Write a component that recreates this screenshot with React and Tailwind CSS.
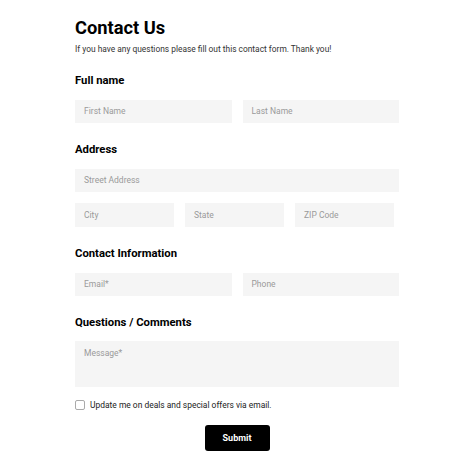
import React from "react";

const FONT = { fontFamily: "Roboto, 'Liberation Sans', sans-serif" };

const Field = ({ placeholder, className = "" }) => (
    <div className={`flex h-[23px] items-center bg-[#f5f5f5] pl-[9px] text-[8.5px] text-[#9a9a9a] ${className}`}>
        {placeholder}
    </div>
);

const Heading = ({ children, className = "" }) => (
    <h2 className={`text-[11.3px] font-bold leading-[16px] text-black ${className}`}>{children}</h2>
);

export default function App() {
    return (
        <div className="min-h-[474px] w-full bg-white" style={FONT}>
            <div className="mx-auto flex w-[324px] flex-col pt-[16px]">
                <h1 className="text-[18.3px] font-bold leading-[23px] text-black">Contact Us</h1>
                <p className="mt-[4px] text-[8.4px] leading-[12px] text-[#333]">
                    If you have any questions please fill out this contact form. Thank you!
                </p>

                {/* Full name */}
                <Heading className="mt-[18px]">Full name</Heading>
                <div className="mt-[11px] grid grid-cols-2 gap-[11px]">
                    <Field placeholder="First Name" />
                    <Field placeholder="Last Name" />
                </div>

                {/* Address */}
                <Heading className="mt-[19px]">Address</Heading>
                <Field placeholder="Street Address" className="mt-[11px]" />
                <div className="mt-[11px] flex gap-[11px]">
                    <Field placeholder="City" className="h-[24px] w-[99px]" />
                    <Field placeholder="State" className="h-[24px] w-[99px]" />
                    <Field placeholder="ZIP Code" className="h-[24px] w-[99px]" />
                </div>

                {/* Contact info */}
                <Heading className="mt-[19px]">Contact Information</Heading>
                <div className="mt-[11px] grid grid-cols-2 gap-[11px]">
                    <Field placeholder="Email*" />
                    <Field placeholder="Phone" />
                </div>

                {/* Comments */}
                <Heading className="mt-[19px]">Questions / Comments</Heading>
                <div className="mt-[10px] h-[46px] bg-[#f5f5f5] pl-[9px] pt-[6px] text-[8.5px] leading-[12px] text-[#9a9a9a]">
                    Message*
                </div>

                <label className="mt-[11px] flex items-center gap-[5px] text-[8.45px] leading-[14px] text-[#222]">
                    <span className="h-[10px] w-[10px] rounded-[2px] border border-[#aaa] bg-white"></span>
                    Update me on deals and special offers via email.
                </label>

                <div className="mt-[13px] flex justify-center">
                    <button className="h-[26px] w-[65px] rounded-[3px] bg-black pt-[1px] text-[9px] font-bold text-white">
                        Submit
                    </button>
                </div>
            </div>
        </div>
    );
}
